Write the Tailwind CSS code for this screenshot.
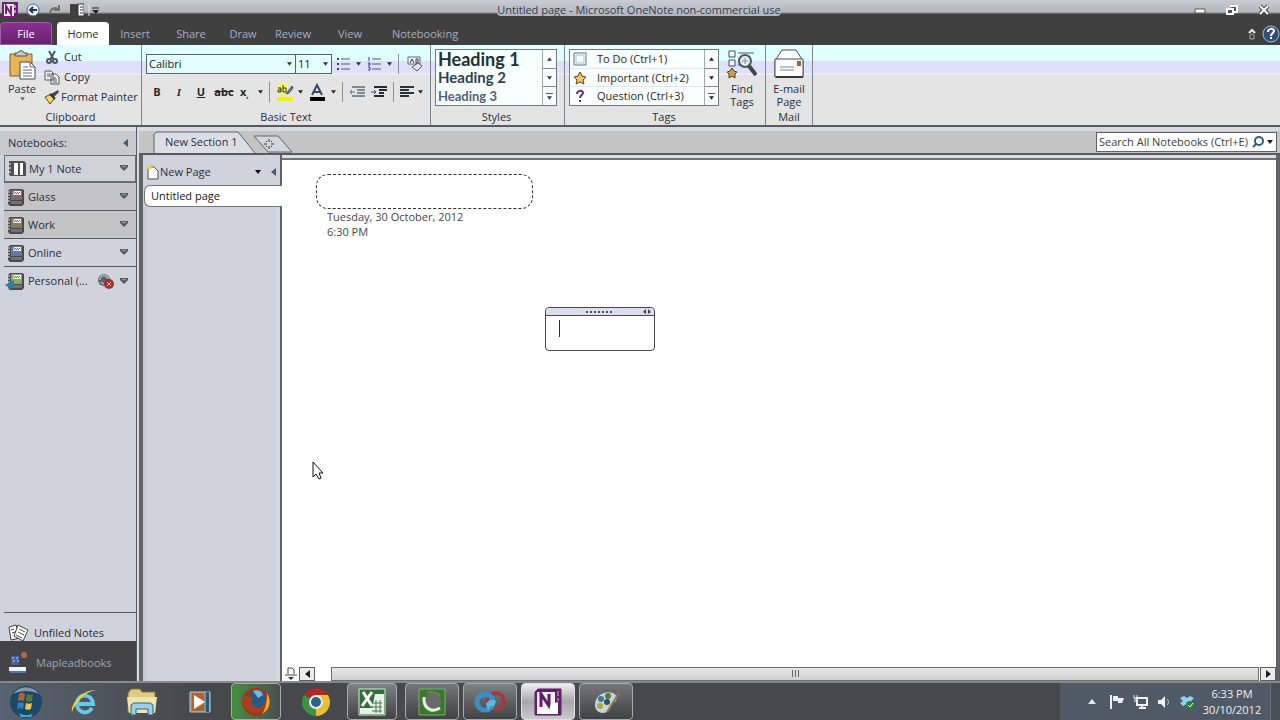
<!DOCTYPE html>
<html lang="en">
<head>
  <meta charset="UTF-8" />
  <meta name="viewport" content="width=device-width, initial-scale=1.0"/>
  <title>Untitled page - Microsoft OneNote</title>
  <script src="https://cdn.jsdelivr.net/npm/@tailwindcss/browser@4"></script>
</head>
<body class="h-screen overflow-hidden flex flex-col bg-[#404040] text-[#283040] text-[11px] leading-4 font-['Open_Sans','Noto_Sans',sans-serif]">

  <!-- Shared icons -->
  <svg class="hidden">
    <symbol id="down" viewBox="0 0 6 4"><path d="M0 0h6L3 4z" fill="currentColor"/></symbol>
    <symbol id="up" viewBox="0 0 6 4"><path d="M0 4h6L3 0z" fill="currentColor"/></symbol>
    <symbol id="chevron" viewBox="0 0 10 7"><path d="M1 0h8v2L5 6 1 2z" fill="#585a62"/><path d="M3 1l2 1 2-1" fill="none" stroke="#a8aab0"/></symbol>
    <symbol id="book" viewBox="0 0 20 20">
      <path d="M4 2h12l2 1v14l-2 2H4l-2-2V4z" fill="#4a4a4e"/>
      <path d="M5 3h11v10H5z" fill="currentColor"/>
      <path d="M8 4h7v4H7z" fill="#f0eeee"/><path d="M8 7l2-2m0 2l2-2m0 2l2-2" stroke="#706060" fill="none"/>
      <path d="M5 14h11v3H5z" fill="#707078"/><path d="M1 5h3M1 8h3M1 11h3M1 14h3" stroke="#eee"/>
    </symbol>
  </svg>

  <!-- Title bar -->
  <header class="h-[22px] shrink-0 flex items-start justify-between bg-linear-to-b from-[#c8ccd2] from-0% via-[#b4b6ba] via-55% to-[#404040] to-65%">
    <div class="flex items-center gap-2 h-5 pl-0.5">
      <svg class="size-4" viewBox="0 0 16 16"><path d="M0 0h16v16H0z" fill="#722072"/><path d="M2 2h10v12H2z" fill="#f4e8f4"/><path d="M4 12V4l5 8V4" fill="none" stroke="#722072" stroke-width="2"/><path d="M13 3v3m0 2v3" stroke="#fff"/></svg>
      <button aria-label="Back"><svg class="size-[14px]" viewBox="0 0 14 14"><circle cx="7" cy="7" r="6" fill="#e8f0f8" stroke="#586880"/><path d="M11 7H4m3-3L4 7l3 3" fill="none" stroke="#203860" stroke-width="2"/></svg></button>
      <button aria-label="Undo"><svg class="size-[14px]" viewBox="0 0 14 14"><path d="M2 10c1-5 5-6 8-4M11 2v5H6" fill="none" stroke="#707070" stroke-width="2"/></svg></button>
      <button aria-label="Dock to desktop"><svg class="w-[14px] h-[14px]" viewBox="0 0 14 14"><path d="M0 1h8v12H0z" fill="#404040"/><path d="M8 1h6v12H8z" fill="#fff" stroke="#303030"/><path d="M10 4h3M10 7h3M10 10h3" stroke="#303030"/></svg></button>
      <button aria-label="Customize" class="-ml-1"><svg class="w-3 h-[14px]" viewBox="0 0 12 14"><path d="M1 1v12" stroke="#e8e8e8"/><path d="M4 5h7" stroke="#222"/><path d="M4 7h7l-3 4z" fill="#222"/></svg></button>
    </div>
    <h1 class="h-4 mr-4 pt-0.5 rounded-b bg-linear-to-b from-[#c8ccd2] to-[#b0b4bc] text-[#303c50]">Untitled page - Microsoft OneNote non-commercial use</h1>
    <div class="flex items-center gap-5 h-5 pr-2.5">
      <button aria-label="Minimize"><svg class="w-3 h-3" viewBox="0 0 12 12"><path d="M1 5h10v4H1z" fill="#fff" stroke="#505050"/></svg></button>
      <button aria-label="Restore"><svg class="w-3 h-3" viewBox="0 0 12 12"><path d="M4 2h7v6H8M1 5h6v5H1z" fill="#505050" stroke="#fff" stroke-width="2"/></svg></button>
      <button aria-label="Close"><svg class="w-3 h-3" viewBox="0 0 12 12"><path d="M2 2l8 8M10 2l-8 8" stroke="#404040" stroke-width="4"/><path d="M2 2l8 8M10 2l-8 8" stroke="#fff" stroke-width="2"/></svg></button>
    </div>
  </header>

  <!-- Ribbon tabs -->
  <nav class="h-[23px] shrink-0 flex text-[#a4aec0]">
    <button class="w-[52px] bg-linear-to-b from-[#8a3090] to-[#682070] text-white rounded-t border border-[#a060a8]">File</button>
    <button class="w-[52px] ml-[5px] bg-white text-[#303030] rounded-t">Home</button>
    <button class="w-[52px]">Insert</button>
    <button class="w-[60px]">Share</button>
    <button class="w-[44px]">Draw</button>
    <button class="w-[56px]">Review</button>
    <button class="w-[58px]">View</button>
    <button class="w-[92px]">Notebooking</button>
    <div class="ml-auto flex items-center gap-1">
      <button aria-label="Collapse ribbon"><svg class="w-3 h-3" viewBox="0 0 12 12"><path d="M3 5l3-3 3 3" fill="none" stroke="#e8e8e8" stroke-width="2"/><path d="M4 11V7l2-1 2 1v4z" fill="none" stroke="#a0a0a0"/></svg></button>
      <button aria-label="Help"><svg class="size-[18px]" viewBox="0 0 18 18"><circle cx="9" cy="9" r="8" fill="#305078" stroke="#a8b8cc"/><path d="M6 7c0-4 6-4 6-1 0 2-3 2-3 5m0 1v2" fill="none" stroke="#fff" stroke-width="2"/></svg></button>
    </div>
  </nav>

  <!-- Ribbon -->
  <section class="h-[82px] shrink-0 flex border-b-2 border-[#585a60] bg-[linear-gradient(#e0ffff_0_16px,#dfe0fc_16px_28px,#ececf4_28px_30px,#e4e4e4_30px)]">

    <div class="w-[142px] border-r border-[#80848c] flex flex-col">
      <div class="h-16 flex">
        <button class="w-[44px] flex flex-col items-center pt-1">
          <svg class="w-7 h-8" viewBox="0 0 28 30">
            <path d="M2 4h22v22H2z" fill="#e8b458" stroke="#806030"/><path d="M7 6V3h3c0-3 6-3 6 0h3v3z" fill="#c8c8cc" stroke="#505050"/>
            <path d="M12 12h10l5 5v12H12z" fill="#fff" stroke="#404858"/><path d="M22 12v5h5M15 17h5M15 20h9M15 23h9M15 26h9" fill="none" stroke="#606878"/>
          </svg>
          <span>Paste</span>
          <svg class="w-[5px] h-1 text-[#707070]"><use href="#down"/></svg>
        </button>
        <div class="flex flex-col items-start pt-1 gap-1">
          <button class="flex items-center gap-1"><svg class="w-4 h-4" viewBox="0 0 16 16"><path d="M5 2l5 9M11 2L6 11" stroke="#505860" stroke-width="2"/><circle cx="5" cy="12" r="2" fill="none" stroke="#505860" stroke-width="2"/><circle cx="11" cy="12" r="2" fill="none" stroke="#505860" stroke-width="2"/></svg>Cut</button>
          <button class="flex items-center gap-1"><svg class="w-4 h-4" viewBox="0 0 16 16"><path d="M1 2h6l2 2v7H1zM7 5h5l3 3v7H7z" fill="#f0f0f0" stroke="#505860"/><path d="M3 5h3M3 7h3M9 9h3M9 11h4M9 13h4" stroke="#505860"/></svg>Copy</button>
          <button class="flex items-center gap-px"><svg class="w-4 h-4" viewBox="0 0 16 16"><path d="M7 5l7-4 1 2-6 6z" fill="#404850"/><path d="M1 8l6-3 4 4-5 6-2-3z" fill="#f0d868" stroke="#504830"/><path d="M6 5l5 5" stroke="#303030" stroke-width="2"/></svg>Format Painter</button>
        </div>
      </div>
      <span class="text-center">Clipboard</span>
    </div>

    <div class="w-[289px] border-r border-[#80848c] flex flex-col">
      <div class="h-16 pt-[9px] pl-1">
        <div class="flex items-center">
          <div class="relative w-[150px] h-5">
            <select aria-label="Font" class="appearance-none size-full bg-[#e4ffff] border border-[#586068] pl-0.5 text-[#181818]"><option>Calibri</option></select>
            <svg class="absolute right-1 top-2 w-[5px] h-1"><use href="#down"/></svg>
          </div>
          <div class="relative w-[37px] h-5 -ml-px">
            <select aria-label="Font size" class="appearance-none size-full bg-[#e4ffff] border border-[#586068] pl-0.5 text-[#181818]"><option>11</option></select>
            <svg class="absolute right-1 top-2 w-[5px] h-1"><use href="#down"/></svg>
          </div>
          <button aria-label="Bullets" class="flex items-center gap-1.5 ml-1"><svg class="w-[14px] h-3" viewBox="0 0 14 12"><path d="M5 1h9M5 6h9M5 11h9" stroke="#505868"/><path d="M1 1h2M1 6h2M1 11h2" stroke="#204080" stroke-width="2"/></svg><svg class="w-[5px] h-1"><use href="#down"/></svg></button>
          <button aria-label="Numbering" class="flex items-center gap-1.5 ml-1.5"><svg class="w-[14px] h-[14px]" viewBox="0 0 14 14"><path d="M5 2h9M5 7h9M5 12h9" stroke="#505868"/><path d="M2 0v4M1 6h2v2H1M1 10h2v3H1" fill="none" stroke="#204080"/></svg><svg class="w-[5px] h-1"><use href="#down"/></svg></button>
          <span class="w-px h-5 bg-[#8890a0] ml-1.5 mr-2"></span>
          <button aria-label="Clear formatting"><svg class="w-4 h-4" viewBox="0 0 16 16"><path d="M1 1h12v7H1z" fill="#f4f4f8" stroke="#606878"/><path d="M3 7l2-4 2 4M9 3v4h2V3z" fill="none" stroke="#303848"/><path d="M5 11l6-4 4 3-5 5z" fill="#e4e4ec" stroke="#505868"/></svg></button>
        </div>
        <div class="flex items-center h-9 text-[#282828] font-bold">
          <button class="w-[22px]">B</button>
          <button class="w-[22px] italic font-['Liberation_Serif']">I</button>
          <button class="w-[22px] underline">U</button>
          <button class="w-6 line-through">abc</button>
          <button class="flex items-center justify-between pl-1 pr-1 w-[31px]"><span>x<sub>,</sub></span><svg class="w-[5px] h-1"><use href="#down"/></svg></button>
          <span class="w-px h-5 bg-[#8890a0] mr-1.5 ml-0.5"></span>
          <button aria-label="Highlight" class="flex items-center gap-1"><svg class="w-[18px] h-[18px]" viewBox="0 0 18 18"><path d="M1 0h10v11H1z" fill="#f8f860"/><path d="M2 5h3v4H2V7h3M7 2v7h3V5H7" fill="none" stroke="#303030"/><path d="M16 3l-6 8 3-1 4-5z" fill="#8088a0" stroke="#404858"/><path d="M1 14h16v4H1z" fill="#f4f000"/></svg><svg class="w-[5px] h-1"><use href="#down"/></svg></button>
          <button aria-label="Font color" class="flex items-center gap-1.5 ml-1.5"><svg class="w-4 h-[18px]" viewBox="0 0 16 18"><path d="M3 12L8 2l5 10M5 9h6" fill="none" stroke="#384868" stroke-width="2"/><path d="M1 14h15v4H1z" fill="#000"/></svg><svg class="w-[5px] h-1"><use href="#down"/></svg></button>
          <span class="w-px h-5 bg-[#8890a0] mx-1.5"></span>
          <button aria-label="Decrease indent"><svg class="w-4 h-3" viewBox="0 0 16 12"><path d="M3 1h13M8 4h8M8 7h8M3 10h13" stroke="#808890" stroke-width="2"/><path d="M6 6H1m2-2L1 6l2 2" fill="none" stroke="#607090"/></svg></button>
          <button aria-label="Increase indent" class="ml-1.5"><svg class="w-4 h-3" viewBox="0 0 16 12"><path d="M3 1h13M8 4h8M8 7h5M3 10h10" stroke="#282830" stroke-width="2"/><path d="M0 6h5M3 4l2 2-2 2" fill="none" stroke="#3050a0"/></svg></button>
          <span class="w-px h-5 bg-[#8890a0] mx-1.5"></span>
          <button aria-label="Align" class="flex items-center gap-1"><svg class="w-[14px] h-3" viewBox="0 0 14 12"><path d="M0 1h14M0 4h9M0 7h14M0 10h9" stroke="#303038" stroke-width="2"/></svg><svg class="w-[5px] h-1"><use href="#down"/></svg></button>
        </div>
      </div>
      <span class="text-center">Basic Text</span>
    </div>

    <div class="w-[134px] border-r border-[#80848c] flex flex-col pl-1">
      <div class="h-16 pt-1">
        <div class="flex w-[122px] h-[57px] border border-[#707880] bg-[#f8ffff] font-bold text-[#304050]">
          <div class="flex-1 flex flex-col items-start pl-0.5 font-['Lato','Open_Sans',sans-serif]">
            <button class="text-[18px] leading-[18px] text-[#203038]">Heading 1</button>
            <button class="text-[15px] leading-[19px]">Heading 2</button>
            <button class="text-[13px] leading-[18px] text-[#506080]">Heading 3</button>
          </div>
          <div class="w-[14px] flex flex-col border-l border-[#a0a8b0] divide-y divide-[#808890]">
            <button aria-label="Previous styles" class="flex-1 flex items-center justify-center"><svg class="w-[5px] h-1"><use href="#up"/></svg></button>
            <button aria-label="Next styles" class="flex-1 flex items-center justify-center"><svg class="w-[5px] h-1"><use href="#down"/></svg></button>
            <button aria-label="All styles" class="flex-1 flex flex-col gap-0.5 items-center justify-center"><span class="w-[7px] h-px bg-[#505868]"></span><svg class="w-[5px] h-1"><use href="#down"/></svg></button>
          </div>
        </div>
      </div>
      <span class="text-center pr-1.5">Styles</span>
    </div>

    <div class="w-[201px] border-r border-[#80848c] flex flex-col pl-1">
      <div class="h-16 pt-1 flex">
        <div class="flex w-[150px] h-[57px] border border-[#707880] bg-[#fafeff] text-[#282828]">
          <div class="flex-1 flex flex-col divide-y divide-[#d8ecf0]">
            <button class="flex-1 flex items-center gap-2.5 pl-[3px]"><svg class="w-[14px] h-[14px]" viewBox="0 0 14 14"><path d="M1 1h12v12H1z" fill="#fff" stroke="#607080"/><path d="M3 3h8v8H3z" fill="#f4fcff" stroke="#a8c4d8"/></svg>To Do (Ctrl+1)</button>
            <button class="flex-1 flex items-center gap-2.5 pl-[3px]"><svg class="w-[14px] h-[14px]" viewBox="0 0 14 14"><path d="M7 1l2 4 4 1-3 3 1 4-4-2-4 2 1-4-3-3 4-1z" fill="#f0c860" stroke="#584020"/></svg>Important (Ctrl+2)</button>
            <button class="flex-1 flex items-center gap-2.5 pl-[3px]"><svg class="w-[14px] h-[14px]" viewBox="0 0 14 14"><path d="M4 5c0-4 6-4 6-1 0 2-3 2-3 5m0 2v2" fill="none" stroke="#702878" stroke-width="2"/></svg>Question (Ctrl+3)</button>
          </div>
          <div class="w-[14px] flex flex-col border-l border-[#a0a8b0] divide-y divide-[#808890]">
            <button aria-label="Previous tags" class="flex-1 flex items-center justify-center"><svg class="w-[5px] h-1"><use href="#up"/></svg></button>
            <button aria-label="Next tags" class="flex-1 flex items-center justify-center"><svg class="w-[5px] h-1"><use href="#down"/></svg></button>
            <button aria-label="All tags" class="flex-1 flex flex-col gap-0.5 items-center justify-center"><span class="w-[7px] h-px bg-[#505868]"></span><svg class="w-[5px] h-1"><use href="#down"/></svg></button>
          </div>
        </div>
        <button class="flex-1 flex flex-col items-center text-center leading-[13px]">
          <svg class="w-[30px] h-[30px]" viewBox="0 0 30 30">
            <path d="M2 2h6v6H2zM2 11h6v6H2z" fill="#f4f8ff" stroke="#384878"/><path d="M11 4h16M11 10h5M11 16h5" stroke="#505868"/>
            <path d="M5 19l2 3 3 1-2 2v4l-3-2-3 2v-4l-2-2 3-1z" fill="#c8a050" stroke="#504020"/>
            <circle cx="18" cy="12" r="6" fill="#e4ecf0" stroke="#505860" stroke-width="2"/><path d="M22 17l7 9" stroke="#404850" stroke-width="4"/><path d="M15 12h6m-3-3v6" stroke="#889098"/>
          </svg>
          <span class="pt-[3px]">Find<br>Tags</span>
        </button>
      </div>
      <span class="text-center pr-1.5">Tags</span>
    </div>

    <div class="w-[47px] border-r border-[#80848c] flex flex-col">
      <button class="h-16 pt-1 flex flex-col items-center text-center leading-[13px]">
        <svg class="w-[30px] h-[30px]" viewBox="0 0 30 30">
          <path d="M1 12L8 1h14l7 11v16H1z" fill="#fff" stroke="#485058"/><path d="M1 10h28v18H1z" fill="#fcfcfc" stroke="#485058"/><path d="M2 28h27" stroke="#383838" stroke-width="2"/>
          <path d="M23 12h4v5h-4z" fill="#a06030"/><path d="M6 18h14M6 21h14" stroke="#808890"/>
        </svg>
        <span class="pt-[3px]">E-mail<br>Page</span>
      </button>
      <span class="text-center">Mail</span>
    </div>
  </section>

  <!-- Workspace -->
  <main class="flex-1 min-h-0 flex bg-[#d0d2dc]">

    <!-- Notebooks -->
    <aside class="w-[137px] shrink-0 flex flex-col border-r border-[#585a60]">
      <div class="h-[28px] flex items-center justify-between bg-[#c8c9cc] border-t-4 border-[#dcdee4] pl-2 pr-2">
        <span>Notebooks:</span>
        <button aria-label="Collapse notebooks"><svg class="w-[5px] h-2" viewBox="0 0 5 8"><path d="M5 0v8L0 4z" fill="#505868"/></svg></button>
      </div>
      <ul class="pl-1">
        <li class="h-7 bg-[#d0d2d8] border border-[#686c78] border-b-2"><button class="size-full flex items-center gap-0.5 pl-0.5 pr-1.5">
          <svg class="size-5" viewBox="0 0 20 20"><path d="M2 2h15l2 2v13H3l-1-2z" fill="#505054"/><path d="M7 4h4v12H7zM13 4h3v12h-3z" fill="#fff"/><path d="M1 5h3M1 9h3M1 13h3" stroke="#eee"/></svg>
          <span class="flex-1 text-left">My 1 Note</span><svg class="w-[10px] h-[7px]"><use href="#chevron"/></svg></button></li>
        <li class="h-7 bg-[#c4c4c6] border-b border-[#585a60]"><button class="size-full flex items-center gap-0.5 pl-0.5 pr-[7px]">
          <svg class="size-5 text-[#806870]"><use href="#book"/></svg>
          <span class="flex-1 text-left">Glass</span><svg class="w-[10px] h-[7px]"><use href="#chevron"/></svg></button></li>
        <li class="h-7 bg-[#c4c4c6] border-b border-[#585a60]"><button class="size-full flex items-center gap-0.5 pl-0.5 pr-[7px]">
          <svg class="size-5 text-[#847c58]"><use href="#book"/></svg>
          <span class="flex-1 text-left">Work</span><svg class="w-[10px] h-[7px]"><use href="#chevron"/></svg></button></li>
        <li class="h-7 border-b border-[#585a60]"><button class="size-full flex items-center gap-0.5 pl-0.5 pr-[7px]">
          <svg class="size-5 text-[#6078a8]"><use href="#book"/></svg>
          <span class="flex-1 text-left">Online</span><svg class="w-[10px] h-[7px]"><use href="#chevron"/></svg></button></li>
        <li class="h-7"><button class="size-full flex items-center gap-0.5 pl-0.5 pr-[7px]">
          <span class="relative"><svg class="size-5 text-[#80b060]"><use href="#book"/></svg><svg class="absolute -left-0.5 bottom-0 w-3 h-3" viewBox="0 0 12 12"><path d="M1 6l9-5v8l-3-1-1 4-2-4z" fill="#2880a8"/></svg></span>
          <span class="flex-1 text-left">Personal (...</span>
          <svg class="w-[18px] h-4 mr-0.5" viewBox="0 0 18 16"><circle cx="7" cy="7" r="6" fill="#606068"/><path d="M3 7a4 4 0 018-1M11 8a4 4 0 01-7 1" fill="none" stroke="#a8a8b0" stroke-width="2"/><circle cx="12" cy="11" r="5" fill="#a03028"/><path d="M10 9l4 4m0-4l-4 4" stroke="#f0c0b8"/></svg>
          <svg class="w-[10px] h-[7px]"><use href="#chevron"/></svg></button></li>
      </ul>
      <div class="mt-auto ml-1 border-t border-[#585a60]">
        <button class="w-full h-7 flex items-center gap-1 pl-1 pt-3">
          <svg class="w-[22px] h-[18px]" viewBox="0 0 22 18"><path d="M1 3l7-2 4 13-9 2z" fill="#f8f8f8" stroke="#404040"/><path d="M10 1l10 5-5 11-9-5z" fill="#fff" stroke="#404040"/><path d="M11 5l6 3M10 8l6 3M8 11l6 3M3 6l3-1M4 9l3-1" stroke="#505050"/></svg>
          Unfiled Notes
        </button>
      </div>
      <div class="h-10 flex items-center bg-[#444446] text-[#98a4b8]">
        <button class="flex items-center gap-2 pl-2 pt-1">
          <svg class="w-5 h-6" viewBox="0 0 20 24"><circle cx="16" cy="4" r="3" fill="#b06858"/><path d="M3 5h8v9H3z" fill="#4860a0"/><path d="M4 7h2m2 0h2M5 10h2m2 0h2" stroke="#c8d4f0"/><path d="M1 16h17v4H1z" fill="#f0f4f8"/><path d="M2 21h16" stroke="#4878c0" stroke-width="2"/></svg>
          Mapleadbooks
        </button>
      </div>
    </aside>
    <div class="w-[2px] bg-[#d8dae0]"></div>

    <div class="flex-1 min-w-0 flex flex-col">

      <!-- Section tabs and search -->
      <div class="h-[26px] shrink-0 flex items-end bg-[#c4c4c4] border-t-4 border-[#d8dae0] pl-[14px]">
        <button class="relative w-[104px] h-[22px] shrink-0 text-left pl-3">
          <svg class="absolute left-0 top-0 w-[104px] h-[22px]" viewBox="0 0 104 22"><path d="M1 22V3l3-2h81l17 21" fill="#dcdee6" stroke="#606470"/></svg>
          <span class="relative">New Section 1</span>
        </button>
        <button aria-label="Create a new section" class="shrink-0 -ml-1"><svg class="w-[42px] h-[18px]" viewBox="0 0 42 18"><path d="M1 1h24l14 16H15z" fill="#d4d6de" stroke="#606470"/><path d="M16 4v3m0 4v3M11 9h3m4 0h3M13 6l1 1m5-1l-1 1m-5 5l1-1m5 1l-1-1" stroke="#303030"/></svg></button>
        <div class="ml-auto mb-px mr-[3px] flex items-center w-[181px] h-5 bg-white border border-[#606468]">
          <input type="text" aria-label="Search" placeholder="Search All Notebooks (Ctrl+E)" class="flex-1 min-w-0 pl-0.5 outline-none placeholder:text-[#404040]">
          <button aria-label="Search"><svg class="w-3 h-3" viewBox="0 0 12 12"><circle cx="7" cy="5" r="4" fill="none" stroke="#286078" stroke-width="2"/><path d="M4 8l-3 3" stroke="#286078" stroke-width="2"/></svg></button>
          <button aria-label="Search scope" class="px-[3px]"><svg class="w-[6px] h-1 text-[#202020]"><use href="#down"/></svg></button>
        </div>
      </div>

      <div class="flex-1 min-h-0 flex border-t-2 border-[#585a60]">

        <!-- Page list -->
        <div class="w-[143px] shrink-0 flex flex-col border-l-4 border-r-2 border-[#606268]">
          <div class="h-[30px] flex items-center pl-1 pr-1 pt-1">
            <button class="flex items-center gap-px"><svg class="w-3 h-4" viewBox="0 0 12 16"><path d="M1 3h6l4 4v8H1z" fill="#fff" stroke="#505050"/><path d="M0 0l2 2 2-2v3l2 1-3 1-1 2-1-2-1-1z" fill="#f0d050"/></svg>New Page</button>
            <button aria-label="New page options" class="ml-auto"><svg class="w-[6px] h-1 text-black"><use href="#down"/></svg></button>
            <button aria-label="Collapse pages" class="ml-2.5"><svg class="w-[5px] h-2" viewBox="0 0 5 8"><path d="M5 0v8L0 4z" fill="#505868"/></svg></button>
          </div>
          <a href="#page" class="h-[22px] flex items-center bg-white rounded-l-md border border-r-0 border-[#707480] pl-1.5 ml-px -mr-0.5 text-[#202020]">Untitled page</a>
          <div class="flex-1 border-x-4 border-[#c8cad2] border-r-[#d8dae2]"></div>
        </div>

        <!-- Page -->
        <div class="flex-1 min-w-0 flex flex-col bg-white border-r-4 border-[#606268]">
          <div class="h-[5px] shrink-0 bg-[#dcdee4] border-b-2 border-[#707278]"></div>
          <div id="page" class="relative flex-1 pt-[14px] pl-[34px] text-[#484848]">
            <input type="text" aria-label="Page title" class="block w-[217px] h-[35px] rounded-xl border border-dashed border-[#303030] px-2 text-base outline-none">
            <p class="pl-[11px] leading-[15px]">Tuesday, 30 October, 2012<br>6:30 PM</p>
            <div class="absolute left-[263px] top-[147px] w-[110px] h-11 rounded border border-[#484a50] bg-white">
              <div class="h-2 flex items-center justify-end bg-[#dcdef0] border-b border-[#484a50] rounded-t">
                <svg class="w-[68px] h-[5px]" viewBox="0 0 68 5"><path d="M0 3h28" stroke="#505058" stroke-dasharray="2 2" stroke-width="2"/><path d="M60 0v5l-3-2zM62 0v5l3-2z" fill="#404048"/></svg>
              </div>
              <div class="flex pl-[13px] pt-1"><span class="w-px h-[17px] bg-[#303030]"></span><textarea aria-label="Note" class="w-20 h-6 resize-none outline-none"></textarea></div>
            </div>
            <svg class="absolute left-[30px] top-[301px] w-3 h-[19px]" viewBox="0 0 12 19"><path d="M1 1v15l3-3 3 5 2-1-2-5h4z" fill="#fff" stroke="#101010"/></svg>
          </div>
          <!-- Horizontal scrollbar -->
          <div class="h-[15px] shrink-0 flex items-center bg-white">
            <button aria-label="New page template" class="w-[17px] flex justify-center"><svg class="w-3 h-[14px]" viewBox="0 0 12 14"><path d="M3 7V1h4l2 2v4M0 8h12" fill="none" stroke="#404040"/><path d="M3 10h6l-3 3z" fill="#303030"/></svg></button>
            <button aria-label="Scroll left" class="w-4 h-[14px] flex items-center justify-center border border-[#606060] bg-[#ececec]"><svg class="w-[5px] h-2" viewBox="0 0 5 8"><path d="M5 0v8L0 4z" fill="#202020"/></svg></button>
            <div class="flex-1 ml-4 mr-px h-[14px] flex items-center justify-center border border-[#707070] bg-linear-to-b from-[#e8e8e8] to-[#d0d0d0]"><span class="w-[7px] h-[7px] border-x border-[#606060] flex justify-center"><span class="w-px bg-[#606060]"></span></span></div>
            <button aria-label="Scroll right" class="w-4 h-[14px] flex items-center justify-center border border-[#606060] bg-[#ececec]"><svg class="w-[5px] h-2" viewBox="0 0 5 8"><path d="M0 0v8l5-4z" fill="#202020"/></svg></button>
          </div>
        </div>
      </div>
    </div>
  </main>

  <!-- Taskbar -->
  <footer class="h-[39px] shrink-0 flex items-stretch border-t-2 border-[#88898c] bg-linear-to-r from-[#586270] from-0% via-[#46484c] via-15% to-[#46484a]">
    <button aria-label="Start" class="w-[55px] flex items-center justify-center pr-1">
      <svg class="w-9 h-[34px]" viewBox="0 0 36 34"><circle cx="18" cy="17" r="16" fill="#1c4868"/><path d="M5 9a16 16 0 0126 0c-8-4-18-4-26 0z" fill="#8898a8"/><path d="M11 9c3-2 4-1 6 0l-1 7c-3-1-4-1-6 0z" fill="#b86038"/><path d="M19 9c3 1 4 1 6 0l-1 7c-3 1-4 1-6 0z" fill="#587840"/><path d="M10 18c2-1 4-1 6 0l-1 6c-2-1-4-1-6 0z" fill="#3080b0"/><path d="M18 18c2 1 4 1 6 0l-1 6c-2 1-4 1-6 0z" fill="#f0c848"/><path d="M11 28c5 3 10 3 14 0l-2 4H13z" fill="#38b0d8"/></svg>
    </button>
    <button aria-label="Internet Explorer" class="w-[58px] flex items-center justify-center">
      <svg class="w-7 h-7" viewBox="0 0 28 28"><path d="M22 20c-5 8-16 4-15-5 1-10 15-10 16 1H8" fill="none" stroke="#68c8e8" stroke-width="4"/><path d="M2 24C0 17 12 1 26 2c-11 2-20 11-24 22z" fill="#f0d040"/></svg>
    </button>
    <button aria-label="Explorer" class="w-[58px] flex items-center justify-center">
      <svg class="w-8 h-7" viewBox="0 0 32 28"><path d="M2 5l3-4h9l2 3h13v20H2z" fill="#e0cc80" stroke="#807040"/><path d="M1 9h30l-2 16H3z" fill="#f0e4a8"/><path d="M5 27V17l3-2h16l3 2v10h-5v-6H10v6z" fill="#98d0e8" stroke="#386078"/></svg>
    </button>
    <button aria-label="Media Player" class="w-[58px] flex items-center justify-center">
      <svg class="w-6 h-6" viewBox="0 0 24 24"><path d="M2 2h20v20H2z" fill="#7890a0" stroke="#b8c8d0"/><path d="M18 2h3v20h-3z" fill="#305878"/><path d="M4 3h12v18H4z" fill="#b86028"/><path d="M6 5l11 7-11 7z" fill="#fff"/></svg>
    </button>
    <button aria-label="Firefox" class="w-[50px] mr-1.5 ml-0.5 flex items-center justify-center rounded border border-[#a8aaac] bg-linear-to-r from-[#409040] to-[#4a4c4e]">
      <svg class="w-8 h-8" viewBox="0 0 32 32"><circle cx="16" cy="16" r="14" fill="#a03818"/><circle cx="17" cy="13" r="9" fill="#285888"/><path d="M13 5c5-2 9 0 10 4l-5 3z" fill="#70b8e0"/><path d="M3 7c3 3 6 4 10 5-1 3-3 5 0 8 5 4 10 1 12-3 0 8-7 11-13 9C4 24 1 16 3 7z" fill="#a84020"/><path d="M27 7c5 8 3 17-5 21 4-6 5-13 5-21z" fill="#f0a828"/></svg>
    </button>
    <button aria-label="Chrome" class="w-[58px] flex items-center justify-center">
      <svg class="w-7 h-7" viewBox="0 0 28 28"><path d="M14 14L2 7a14 14 0 0124 0z" fill="#b02828"/><path d="M14 14h14a14 14 0 01-14 14z" fill="#e8c030"/><path d="M26 7H14v7h14c0-3-1-5-2-7z" fill="#e8c030"/><path d="M14 14L2 7a14 14 0 0012 21z" fill="#409048"/><circle cx="14" cy="14" r="7" fill="#e8ecf0"/><circle cx="14" cy="14" r="5" fill="#306088"/></svg>
    </button>
    <button aria-label="Excel" class="w-[50px] mr-1.5 ml-0.5 flex items-center justify-center rounded border border-[#a8aaac] bg-linear-to-b from-[#808284] to-[#404244]">
      <svg class="w-7 h-7" viewBox="0 0 28 28"><path d="M1 1h26v26H1z" fill="#307038" stroke="#d8e8d8"/><path d="M17 6h9v20H2v-6h12z" fill="#e8f0e8"/><path d="M5 4l9 14M14 4L4 18" stroke="#fff" stroke-width="3"/><path d="M14 15h10M14 19h10M14 23h10M18 12v13M22 12v13" stroke="#487850"/></svg>
    </button>
    <button aria-label="Camtasia" class="w-[54px] mx-0.5 flex items-center justify-center rounded border border-[#a8aaac] bg-linear-to-b from-[#747678] to-[#404244]">
      <svg class="w-7 h-7" viewBox="0 0 28 28"><path d="M1 1h26v26H1z" fill="#38782c" stroke="#80a870"/><circle cx="15" cy="13" r="8" fill="#686a68"/><path d="M6 9c-1 12 8 16 16 11" fill="none" stroke="#e8f0e0" stroke-width="3"/><path d="M9 5a11 11 0 0113 3" fill="none" stroke="#608850" stroke-width="2"/></svg>
    </button>
    <button aria-label="Sync" class="w-[54px] mx-0.5 flex items-center justify-center rounded border border-[#a8aaac] bg-linear-to-b from-[#808284] to-[#404244]">
      <svg class="w-8 h-6" viewBox="0 0 32 24"><circle cx="22" cy="11" r="8" fill="none" stroke="#a83840" stroke-width="4"/><circle cx="11" cy="12" r="8" fill="none" stroke="#3890c8" stroke-width="5"/><path d="M12 14c3-5 6-5 10-3l-2 5c-3-1-5 1-6 5z" fill="#58b8e8"/></svg>
    </button>
    <button aria-label="OneNote" class="w-[54px] mx-0.5 flex items-center justify-center rounded border border-[#e0e0e0] bg-linear-to-b from-[#f0f0f0] via-[#a8a8aa] to-[#c8c8ca]">
      <svg class="w-7 h-7" viewBox="0 0 28 28"><path d="M4 1h23v26H1V4z" fill="#602068" stroke="#602068"/><path d="M3 4h18v20H3z" fill="#f4ecf4"/><path d="M7 19V6l8 12V6" fill="none" stroke="#602068" stroke-width="3"/><path d="M17 16l7-2v12H3v-4h12z" fill="#fff"/><path d="M24 3v5m0 2v3" stroke="#e0b0e0"/></svg>
    </button>
    <button aria-label="Paint" class="w-[54px] mx-0.5 flex items-center justify-center rounded border border-[#a8aaac] bg-linear-to-b from-[#747678] to-[#404244]">
      <svg class="w-7 h-7" viewBox="0 0 28 28"><path d="M3 17C3 7 13 2 21 5c6 3 4 9-1 11-3 1-1 4-4 7-4 4-13 2-13-6z" fill="#c8d4d8"/><circle cx="9" cy="11" r="3" fill="#407890"/><circle cx="16" cy="8" r="3" fill="#587840"/><circle cx="8" cy="18" r="3" fill="#a8a848"/><circle cx="15" cy="14" r="3" fill="#305060"/><path d="M27 5L15 24" stroke="#887858" stroke-width="2"/></svg>
    </button>

    <!-- Tray -->
    <div class="ml-auto flex items-center bg-[#505a66] text-[#f0f0f0] pl-7">
      <button aria-label="Show hidden icons" class="pr-3.5"><svg class="w-2 h-[5px]" viewBox="0 0 8 5"><path d="M0 5h8L4 0z" fill="#e8e8e8"/></svg></button>
      <div class="flex items-center gap-[9px]">
        <svg class="w-[14px] h-[14px]" viewBox="0 0 14 14"><path d="M1 0v14" stroke="#f0f0f0" stroke-width="2"/><path d="M3 1h5v2h6l-2 5H8V6H3z" fill="#f0f0f0"/></svg>
        <svg class="w-[15px] h-[14px]" viewBox="0 0 15 14"><path d="M4 3h10v7H4zM9 10v3M6 13h7" fill="none" stroke="#f0f0f0" stroke-width="2"/><path d="M1 0v3h3V0M2 3v4" fill="none" stroke="#f0f0f0"/></svg>
        <svg class="w-[14px] h-[14px]" viewBox="0 0 14 14"><path d="M1 5h3l4-4v12L4 9H1z" fill="#f0f0f0"/><path d="M10 4c2 2 2 4 0 6" fill="none" stroke="#c8ccd0"/></svg>
        <svg class="w-[14px] h-[14px]" viewBox="0 0 14 14"><path d="M0 3l4-2 3 2 3-2 4 2-3 3 3 3-4 2-3-2-4 2-3-3 3-2z" fill="#90d0f0"/><circle cx="10" cy="10" r="4" fill="#288038"/><path d="M8 10l2 2 3-4" fill="none" stroke="#fff"/></svg>
      </div>
      <div class="w-[76px] text-center text-[11px] leading-4">6:33 PM<br>30/10/2012</div>
      <button aria-label="Show desktop" class="w-[10px] h-full border-l border-[#687078] bg-[#485058]"></button>
    </div>
  </footer>
</body>
</html>
